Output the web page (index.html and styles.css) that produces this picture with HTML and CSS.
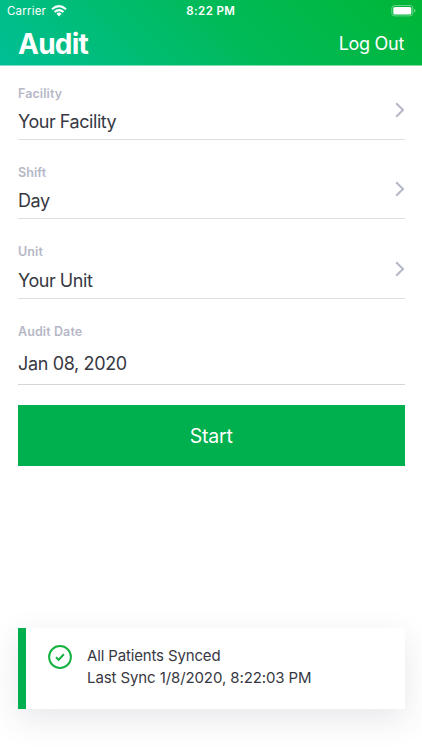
FILE: index.html
```html
<!DOCTYPE html>
<html lang="en">
<head>
<meta charset="utf-8">
<title>Audit</title>
<link rel="stylesheet" href="styles.css">
</head>
<body>
<header class="header">
  <div class="status">
    <div class="carrier"><span>Carrier</span>
      <svg class="wifi" width="16" height="12" viewBox="0 0 16 12" fill="none" stroke="#fff" stroke-width="2.1"><path d="M1 4.300Q8-1.900 15 4.300M3.500 7Q8 3.100 12.500 7"/><path d="M5.500 8.700Q8 6.500 10.500 8.700L8 11.400Z" fill="#fff" stroke="none"/></svg>
    </div>
    <span class="time">8:22 PM</span>
    <svg class="battery" width="25" height="12" viewBox="0 0 25 12"><rect x=".8" y=".5" width="21" height="10.400" rx="2.800" fill="none" stroke="#fff" stroke-opacity=".4"/><rect x="2.300" y="2" width="18" height="7.400" rx="1.500" fill="#fff"/><path d="M23.200 4v3.500q1.300-.5 1.300-1.750T23.200 4Z" fill="#fff" fill-opacity=".5"/></svg>
  </div>
  <div class="nav"><h1>Audit</h1><a class="logout">Log Out</a></div>
</header>
<main class="main">
  <section class="field"><div class="label">Facility</div><div class="value">Your Facility</div>
    <svg class="chevron" width="10" height="16" viewBox="0 0 10 16"><path d="M1.200 1.300 8 8l-6.800 6.700"/></svg></section>
  <section class="field"><div class="label">Shift</div><div class="value">Day</div>
    <svg class="chevron" width="10" height="16" viewBox="0 0 10 16"><path d="M1.200 1.300 8 8l-6.800 6.700"/></svg></section>
  <section class="field"><div class="label">Unit</div><div class="value">Your Unit</div>
    <svg class="chevron" width="10" height="16" viewBox="0 0 10 16"><path d="M1.200 1.300 8 8l-6.800 6.700"/></svg></section>
  <section class="field date"><div class="label">Audit Date</div><div class="value">Jan 08, 2020</div></section>
  <button class="start">Start</button>
</main>
<aside class="sync">
  <svg class="check" width="24" height="24" viewBox="0 0 24 24" fill="none" stroke="#16b242"><circle cx="12" cy="12" r="10.900" stroke-width="2"/><path d="m8 12.300 2.700 2.500 5.200-5.500" stroke-width="2"/></svg>
  <div class="sync-text"><div class="sync-title">All Patients Synced</div><div class="sync-time">Last Sync 1/8/2020, 8:22:03 PM</div></div>
</aside>
</body>
</html>
```
FILE: styles.css
```css
* { box-sizing: border-box; }
body {
  margin: 0;
  height: 750px;
  display: flex;
  flex-direction: column;
  overflow: hidden;
  background: #fff;
  color: #383843;
  font-family: Inter, "Liberation Sans", sans-serif;
}
.header {
  height: 65.5px;
  border-bottom: 1px solid rgba(255, 255, 255, .5);
  color: #fff;
  background: linear-gradient(45deg, #00bf96 0%, #00ba58 55%, #00b636 100%) border-box;
}
.status {
  height: 22px;
  padding: 0 6px 0 7px;
  display: grid;
  grid-template-columns: 1fr auto 1fr;
  align-items: center;
  font-size: 11.5px;
}
.carrier { display: flex; align-items: center; gap: 4px; letter-spacing: .2px; }
.wifi { position: relative; left: 1px; }
.time { position: relative; left: -.7px; font-weight: 600; letter-spacing: .4px; }
.battery { justify-self: end; }
.nav {
  height: 43px;
  padding: 0 18px;
  display: flex;
  align-items: center;
  justify-content: space-between;
}
h1 { margin: 0; font-size: 28px; line-height: 34px; font-weight: 700; letter-spacing: -.75px; }
.logout { font-size: 18px; line-height: 22px; margin-top: 1px; letter-spacing: -.3px; }
.main { padding: 0 17.5px 0 18px; }
.field {
  position: relative;
  height: 79.5px;
  padding-top: 25px;
  border-bottom: 1px solid #dfdfe3;
}
.field:first-child { height: 74px; padding-top: 20px; }
.label {
  color: #b6b7c7;
  font-size: 12.5px;
  line-height: 16px;
  font-weight: 600;
  letter-spacing: .1px;
}
.value { margin-top: 7.5px; font-size: 18px; line-height: 26px; letter-spacing: -.45px; }
.chevron { position: absolute; right: -.5px; bottom: 21px; fill: none; stroke: #b6b7c7; stroke-width: 2; }
.date { height: 86px; border-color: #d5d5da; }
.date .value { margin-top: 11px; letter-spacing: -.35px; }
.start {
  display: block;
  width: 100%;
  height: 61px;
  margin-top: 20.5px;
  padding: 0;
  border: 0;
  background: #00b04e;
  color: #fff;
  font: 400 19.5px Inter, "Liberation Sans", sans-serif;
  letter-spacing: -.2px;
}
.sync {
  height: 81.5px;
  margin: auto 17.5px 41px 18px;
  padding: 17px 0 0 22px;
  display: flex;
  gap: 15px;
  border-left: 8px solid #00b04e;
  background: #fff;
  box-shadow: 0 10px 32px rgba(56, 56, 90, .12);
}
.sync-text { font-size: 15px; line-height: 22.5px; letter-spacing: -.1px; white-space: nowrap; }
.sync-title { letter-spacing: -.15px; }
```
